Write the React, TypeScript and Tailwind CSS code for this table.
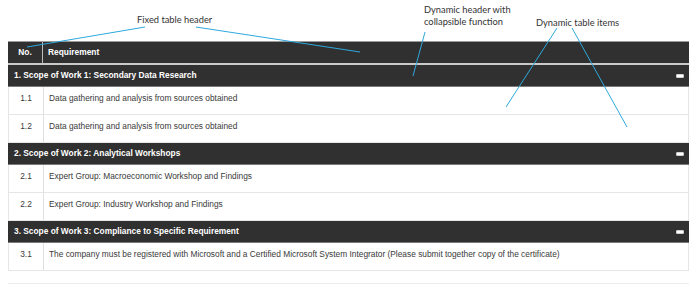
import React from "react";

const sections = [
   {
      title: "1. Scope of Work 1: Secondary Data Research",
      items: [
         { no: "1.1", text: "Data gathering and analysis from sources obtained" },
         { no: "1.2", text: "Data gathering and analysis from sources obtained" },
      ],
   },
   {
      title: "2. Scope of Work 2: Analytical Workshops",
      items: [
         { no: "2.1", text: "Expert Group: Macroeconomic Workshop and Findings" },
         { no: "2.2", text: "Expert Group: Industry Workshop and Findings" },
      ],
   },
   {
      title: "3. Scope of Work 3: Compliance to Specific Requirement",
      items: [
         {
            no: "3.1",
            text: "The company must be registered with Microsoft and a Certified Microsoft System Integrator (Please submit together copy of the certificate)",
         },
      ],
   },
];

const callouts = [
   { text: "Fixed table header", x: 137, y: 14 },
   { text: "Dynamic header with", x: 424, y: 4 },
   { text: "collapsible function", x: 424, y: 16 },
   { text: "Dynamic table items", x: 536, y: 17 },
];

const lines = [
   [145, 27, 27, 47],
   [196, 27, 360, 52],
   [425, 32, 413, 76],
   [557, 28, 506, 107],
   [572, 28, 627, 127],
];

export default function App() {
   return (
      <div
         className="relative w-[700px] h-[289px] bg-white overflow-hidden"
         style={{ fontFamily: "'Liberation Sans', Arial, sans-serif" }}
      >
         <div className="h-[41px]" />

         <div className="mx-[8px] w-[681px]">
            {/* fixed header */}
            <div className="flex h-[22px] bg-[#303030] border-t border-[#9a9a9a] text-white font-bold text-[8.4px]">
               <div className="w-[35px] flex items-center justify-center border-r border-[#bdbdbd]">
                  No.
               </div>
               <div className="flex items-center pl-[5px]">Requirement</div>
            </div>
            <div className="h-[2px] bg-[#c9c9c9]" />

            {sections.map((section) => (
               <div key={section.title}>
                  <div className="flex items-center justify-between h-[22px] bg-[#303030] border-b border-[#7a7a7a] pl-[6px] pr-[5px] text-white font-bold text-[8.35px]">
                     <span>{section.title}</span>
                     <span className="w-[8px] h-[4px] bg-white rounded-[1px] border border-[#d0d0d0]" />
                  </div>
                  {section.items.map((item) => (
                     <div
                        key={item.no}
                        className="flex h-[28px] bg-white border-x border-b border-[#e6e6e6] text-[#3a3a3a] text-[8.35px] leading-[10px]"
                     >
                        <div className="w-[35px] pt-[6px] text-center border-r border-[#e0e0e0]">
                           {item.no}
                        </div>
                        <div className="pl-[5px] pt-[6px]">{item.text}</div>
                     </div>
                  ))}
               </div>
            ))}

            <div className="h-[12px]" />
            <div className="h-px bg-[#ececec]" />
         </div>

         {/* annotations */}
         {callouts.map((c) => (
            <span
               key={c.text}
               className="absolute text-[9.3px] leading-[12px] text-[#333]"
               style={{ left: c.x, top: c.y, fontFamily: "Lato, 'Open Sans', sans-serif" }}
            >
               {c.text}
            </span>
         ))}
         <svg className="absolute inset-0 pointer-events-none" width="700" height="289">
            {lines.map(([x1, y1, x2, y2], i) => (
               <line key={i} x1={x1} y1={y1} x2={x2} y2={y2} stroke="#2ea8de" strokeWidth="1" />
            ))}
         </svg>
      </div>
   );
}
